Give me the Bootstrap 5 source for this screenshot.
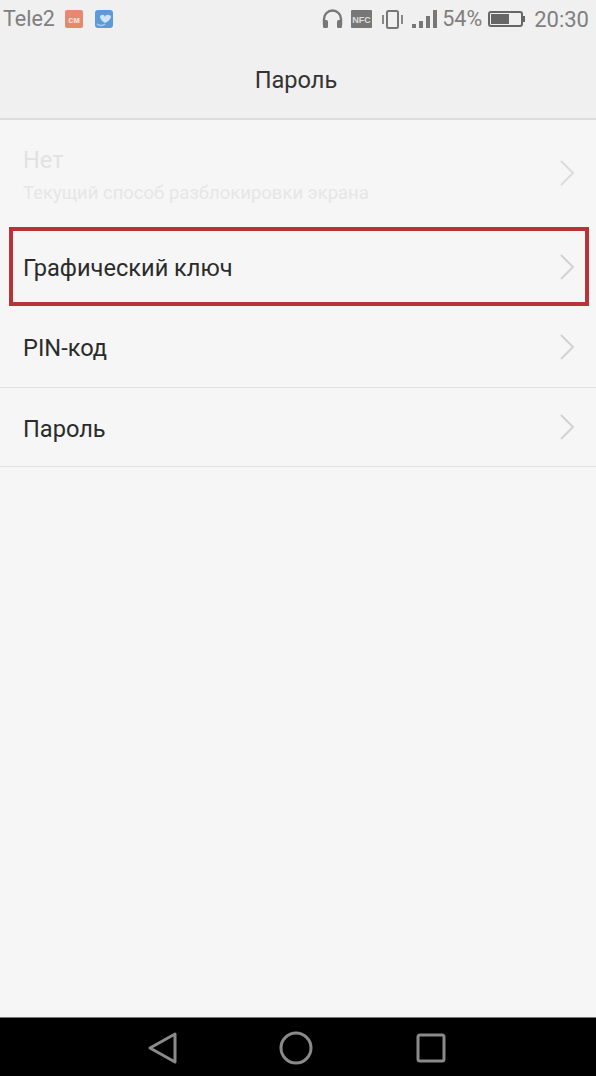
<!DOCTYPE html>
<html lang="ru">
<head>
  <meta charset="UTF-8" />
  <meta name="viewport" content="width=device-width, initial-scale=1.0"/>
  <title>Пароль</title>
  <link href="https://cdn.jsdelivr.net/npm/bootstrap@5.3.3/dist/css/bootstrap.min.css" rel="stylesheet">
  <style>
    html, body { height: 100%; }
    body {
      background: #f6f6f6;
      font-family: Roboto, "Liberation Sans", sans-serif;
      overflow: hidden;
    }
    .screen { height: 1076px; }
    .top-area {
      height: 120px;
      background: #f0f0f0;
      border-bottom: 2px solid #dcdcdc;
    }
    .status-bar {
      height: 38px;
      padding: 0 7px 0 3px;
      color: #7f7f7f;
      font-size: 21.5px;
    }
    .status-left { gap: 10px; }
    .status-right { gap: 8px; }
    .status-icons { margin-right: -5px; }
    .status-battery { margin-left: -2px; }
    .status-clock { font-size: 22px; }
    .page-title {
      height: 80px;
      padding: 6px 4px 0 0;
      font-size: 23.6px;
      color: #333;
    }
    .row-item {
      height: 80px;
      padding: 0 21px 0 23px;
      font-size: 23.6px;
      color: #2b2b2b;
      border-bottom: 1px solid #e2e2e2;
    }
    .row-label { padding-top: 5px; }
    .row-first { height: 107px; border-bottom: 0; }
    .row-off { color: #e2e2e2; }
    .row-off .row-main { margin-top: 4px; line-height: 28px; }
    .row-off .row-sub { font-size: 18.5px; color: #e6e6e6; margin-top: 7px; line-height: 24px; }
    .row-off svg { margin-top: -2px; }
    .row-key { height: 79px; border-bottom: 0; }
    .row-pin { height: 82px; }
    .row-last { height: 79px; }
    .red-frame {
      position: absolute;
      left: 9px;
      top: 227px;
      width: 580px;
      height: 79px;
      border: 4px solid #b8323a;
    }
    .nav-bottom {
      height: 59px;
      background: #000;
      border-top: 1px solid #777;
      padding-top: 2px;
    }
    .icon-label { font-family: "Liberation Sans", sans-serif; font-weight: 700; }
  </style>
</head>
<body>
  <div class="screen d-flex flex-column position-relative">
    <div class="top-area flex-shrink-0">
      <div class="status-bar d-flex align-items-center justify-content-between">
        <div class="status-left d-flex align-items-center">
          <span>Tele2</span>
          <svg width="50" height="20" viewBox="0 0 50 20">
            <rect x="0" y="1" width="18" height="18" rx="2" fill="#e58a70"/>
            <text class="icon-label" x="9" y="14" font-size="9" text-anchor="middle" fill="#fbe4dc">см</text>
            <rect x="30" y="1" width="18" height="18" rx="3" fill="#5d9bd8"/>
            <path d="M35 7q4-3 5 1q1-4 6-1q0 4-6 7q-5-3-5-7z" fill="#cfe4f7"/>
            <path d="M32 15q4 3 8 0" fill="none" stroke="#a9cdee" stroke-width="1.5"/>
          </svg>
        </div>
        <div class="status-right d-flex align-items-center">
          <svg class="status-icons" width="118" height="24" viewBox="0 0 118 24">
            <path d="M3 18v-6a8.500 8.500 0 0 1 17 0v6" fill="none" stroke="#777" stroke-width="2.400"/>
            <rect x="2" y="13" width="5" height="8" rx="1.500" fill="#777"/>
            <rect x="16" y="13" width="5" height="8" rx="1.500" fill="#777"/>
            <rect x="30" y="3" width="21" height="18" rx="1" fill="#777"/>
            <text class="icon-label" x="40.500" y="16" font-size="9" text-anchor="middle" fill="#ddd">NFC</text>
            <rect x="66" y="4" width="11" height="17" rx="1.500" fill="none" stroke="#777" stroke-width="2"/>
            <path d="M62 8v9M81 8v9" stroke="#888" stroke-width="2"/>
            <path d="M91 17h4v4h-4zM98 14h4v7h-4zM105 9h4v12h-4zM112 3h4v18h-4z" fill="#777"/>
          </svg>
          <span>54%</span>
          <svg class="status-battery" width="38" height="18" viewBox="0 0 38 18">
            <rect x="1" y="2" width="33" height="14" rx="2" fill="none" stroke="#666" stroke-width="2"/>
            <rect x="3" y="4" width="18" height="10" fill="#666"/>
            <rect x="35" y="6" width="2" height="6" fill="#666"/>
          </svg>
          <span class="status-clock">20:30</span>
        </div>
      </div>
      <div class="page-title d-flex align-items-center justify-content-center">Пароль</div>
    </div>

    <div class="row-item row-first row-off d-flex align-items-center justify-content-between">
      <div>
        <div class="row-main">Нет</div>
        <div class="row-sub">Текущий способ разблокировки экрана</div>
      </div>
      <svg width="16" height="26" viewBox="0 0 16 26"><path d="M2 1l12 12L2 25" fill="none" stroke="#dcdcdc" stroke-width="2"/></svg>
    </div>
    <div class="row-item row-key d-flex align-items-center justify-content-between">
      <span class="row-label">Графический ключ</span>
      <svg width="16" height="26" viewBox="0 0 16 26"><path d="M2 1l12 12L2 25" fill="none" stroke="#d2d2d2" stroke-width="2"/></svg>
    </div>
    <div class="row-item row-pin d-flex align-items-center justify-content-between">
      <span class="row-label">PIN-код</span>
      <svg width="16" height="26" viewBox="0 0 16 26"><path d="M2 1l12 12L2 25" fill="none" stroke="#d2d2d2" stroke-width="2"/></svg>
    </div>
    <div class="row-item row-last d-flex align-items-center justify-content-between">
      <span class="row-label">Пароль</span>
      <svg width="16" height="26" viewBox="0 0 16 26"><path d="M2 1l12 12L2 25" fill="none" stroke="#d2d2d2" stroke-width="2"/></svg>
    </div>

    <div class="flex-grow-1"></div>

    <div class="nav-bottom d-flex align-items-center justify-content-center flex-shrink-0">
      <svg width="300" height="36" viewBox="0 0 300 36">
        <path d="M27 4L2 18l25 14z" fill="none" stroke="#8a8a8a" stroke-width="3" stroke-linejoin="round"/>
        <circle cx="148" cy="18" r="15" fill="none" stroke="#8a8a8a" stroke-width="3"/>
        <rect x="270" y="5" width="26" height="26" rx="2" fill="none" stroke="#8a8a8a" stroke-width="3"/>
      </svg>
    </div>

    <div class="red-frame"></div>
  </div>
  <script src="https://cdn.jsdelivr.net/npm/bootstrap@5.3.3/dist/js/bootstrap.bundle.min.js"></script>
</body>
</html>
